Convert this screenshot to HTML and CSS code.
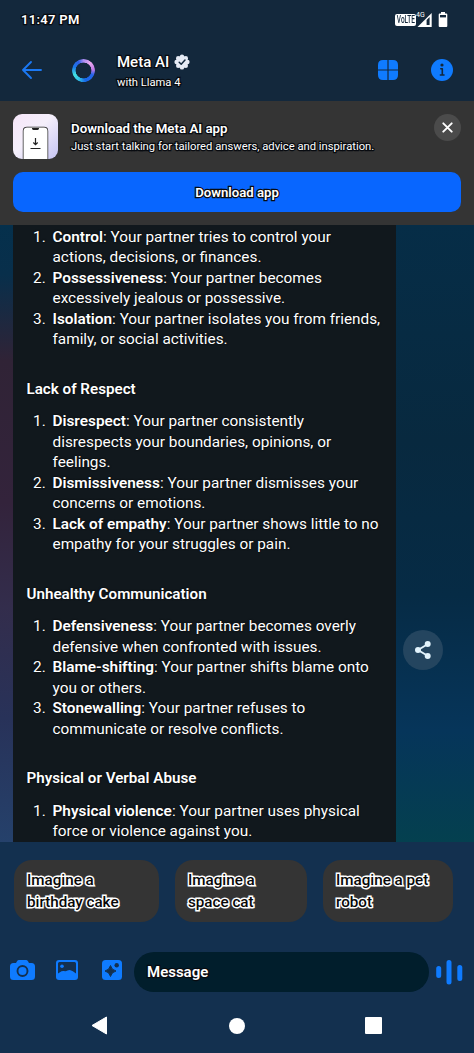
FILE: index.html
```html
<!DOCTYPE html>
<html lang="en">
  <head>
    <meta charset="UTF-8" />
    <meta name="viewport" content="width=device-width, initial-scale=1.0" />
    <title>Meta AI</title>
    <link rel="stylesheet" href="styles.css">
  </head>
  <body>
    <div class="phone">
      <div class="status-bar">
        <span class="time">11:47 PM</span>
        <div class="status-icons">
          <span class="volte"><span>VoLTE</span></span>
          <span class="signal">
            <svg width="17" height="16" viewBox="0 0 17 16">
              <path d="M15.7 1v14H1.5z" fill="#fff" />
              <path d="M10.600 8l3-3V13h-3z" fill="#13283c" />
            </svg>
            <span class="net">4G</span>
          </span>
          <svg class="battery" width="10" height="15" viewBox="0 0 10 15">
            <path d="M3 0h4v1.500h1.300q1 0 1 1V14q0 1-1 1H1.700q-1 0-1-1V2.500q0-1 1-1H3z" fill="#fff" />
            <path d="M2 3h6v2.400H2z" fill="#13283c" />
          </svg>
        </div>
      </div>

      <header class="header">
        <svg class="back" width="22" height="20" viewBox="0 0 22 20">
          <path d="M10 2L2 10l8 8M2 10h18" fill="none" stroke="#1b78f2" stroke-width="1.900" stroke-linecap="round" stroke-linejoin="round" />
        </svg>
        <div class="ring"></div>
        <div class="title">
          <h1>
            Meta AI
            <svg width="16" height="16" viewBox="0 0 16 16">
              <g fill="#e6ebf5">
                <circle cx="8" cy="8" r="6" />
                <circle cx="8" cy="2.600" r="2.200" />
                <circle cx="11.800" cy="4.200" r="2.200" />
                <circle cx="13.400" cy="8" r="2.200" />
                <circle cx="11.800" cy="11.800" r="2.200" />
                <circle cx="8" cy="13.400" r="2.200" />
                <circle cx="4.200" cy="11.800" r="2.200" />
                <circle cx="2.600" cy="8" r="2.200" />
                <circle cx="4.200" cy="4.200" r="2.200" />
              </g>
              <path d="M5.200 8.300l2 2 3.800-4.200" fill="none" stroke="#13283c" stroke-width="1.500" stroke-linecap="round" stroke-linejoin="round" />
            </svg>
          </h1>
          <p>with Llama 4</p>
        </div>
        <svg class="grid-icon" width="20" height="20" viewBox="0 0 20 20" fill="#0f7bff">
          <path d="M5 0h4.400v9.400H0V5q0-5 5-5zM10.600 0H15q5 0 5 5v4.400h-9.400zM0 10.600h9.400V20H5q-5 0-5-5zM10.600 10.600H20V15q0 5-5 5h-4.400z" />
        </svg>
        <svg class="info-icon" width="22" height="22" viewBox="0 0 22 22">
          <circle cx="11" cy="11" r="11" fill="#0f7bff" />
          <circle cx="11" cy="6" r="1.600" fill="#13283c" />
          <path d="M9.800 9.800h1.500v6M9.400 16h3.600" fill="none" stroke="#13283c" stroke-width="1.600" stroke-linecap="round" stroke-linejoin="round" />
        </svg>
      </header>

      <section class="banner">
        <div class="banner-top">
          <svg class="app-icon" width="45" height="45" viewBox="0 0 45 45">
            <defs>
              <linearGradient id="tile" x1="0" y1="0" x2="1" y2="1">
                <stop offset="0" stop-color="#f6e6f8" />
                <stop offset="0.450" stop-color="#f5effb" />
                <stop offset="1" stop-color="#c5c4f3" />
              </linearGradient>
            </defs>
            <rect width="45" height="45" rx="9" fill="url(#tile)" />
            <path d="M10.500 45V17q0-3.500 3.500-3.500h17q3.500 0 3.500 3.500v28" fill="#fff" stroke="#222" stroke-width="1.400" />
            <path d="M19 14h7v.6q0 1.400-1.400 1.400h-4.200q-1.400 0-1.400-1.400z" fill="#222" />
            <path d="M22.500 24v6.500M20.300 28.500l2.200 2.200 2.200-2.200M17.500 34.500h10" fill="none" stroke="#222" stroke-width="1.200" />
          </svg>
          <div class="banner-text">
            <h2>Download the Meta AI app</h2>
            <p>Just start talking for tailored answers, advice and inspiration.</p>
          </div>
          <button class="close" aria-label="Close">
            <svg width="11" height="11" viewBox="0 0 11 11">
              <path d="M1.300 1.300l8.400 8.400M9.700 1.300l-8.400 8.400" stroke="#fff" stroke-width="1.900" stroke-linecap="round" />
            </svg>
          </button>
        </div>
        <button class="download">Download app</button>
      </section>

      <main class="chat">
        <div class="bubble">
          <ol>
            <li><b>Control</b>: Your partner tries to control your actions, decisions, or finances.</li>
            <li><b>Possessiveness</b>: Your partner becomes excessively jealous or possessive.</li>
            <li><b>Isolation</b>: Your partner isolates you from friends, family, or social activities.</li>
          </ol>
          <h3>Lack of Respect</h3>
          <ol>
            <li><b>Disrespect</b>: Your partner consistently disrespects your boundaries, opinions, or feelings.</li>
            <li><b>Dismissiveness</b>: Your partner dismisses your concerns or emotions.</li>
            <li><b>Lack of empathy</b>: Your partner shows little to no empathy for your struggles or pain.</li>
          </ol>
          <h3>Unhealthy Communication</h3>
          <ol>
            <li><b>Defensiveness</b>: Your partner becomes overly defensive when confronted with issues.</li>
            <li><b>Blame-shifting</b>: Your partner shifts blame onto you or others.</li>
            <li><b>Stonewalling</b>: Your partner refuses to communicate or resolve conflicts.</li>
          </ol>
          <h3>Physical or Verbal Abuse</h3>
          <ol>
            <li><b>Physical violence</b>: Your partner uses physical force or violence against you.</li>
          </ol>
        </div>
        <button class="share" aria-label="Share">
          <svg width="18" height="20" viewBox="0 0 18 20" fill="#e2f3fc">
            <path d="M14 4L4 10l10 6" fill="none" stroke="#e2f3fc" stroke-width="1.900" />
            <circle cx="13.700" cy="4" r="3" />
            <circle cx="4" cy="10" r="3" />
            <circle cx="13.700" cy="16" r="3" />
          </svg>
        </button>
      </main>

      <footer class="bottom">
        <div class="chips">
          <button class="chip cake">Imagine a<br>birthday cake</button>
          <button class="chip cat">Imagine a<br>space cat</button>
          <button class="chip pet">Imagine a pet<br>robot</button>
        </div>

        <div class="composer">
          <div class="tools">
            <svg width="25" height="20" viewBox="0 0 25 20">
              <path d="M9 0h7q1.300 0 2 1.200L19 3h2.500Q25 3 25 6.500v10q0 3.500-3.500 3.500h-18Q0 20 0 16.500v-10Q0 3 3.500 3H6l1-1.800Q7.700 0 9 0z" fill="#0f7bff" />
              <circle cx="12.500" cy="11" r="5" fill="none" stroke="#14304f" stroke-width="1.900" />
            </svg>
            <svg width="22" height="20" viewBox="0 0 22 20">
              <rect width="22" height="20" rx="3" fill="#0f7bff" />
              <path d="M2 13.500V3.500Q2 2 3.500 2h15Q20 2 20 3.500v10q-3.500-2.800-5.500-3.300-1.500-.4-3 .4-1.800 1-3.200.5-1.500-.5-2.800.2z" fill="#14304f" />
              <circle cx="6" cy="6.300" r="1.800" fill="#0f7bff" />
            </svg>
            <svg width="20" height="20" viewBox="0 0 20 20">
              <rect width="20" height="20" rx="3.500" fill="#0f7bff" />
              <path d="M8.500 5.500q1 4.500 5.500 5.500-4.500 1-5.500 5.500-1-4.500-5.500-5.500 4.500-1 5.500-5.500z" fill="#14304f" stroke="#14304f" stroke-linejoin="round" />
              <circle cx="14.700" cy="5.300" r="2.200" fill="#14304f" />
            </svg>
          </div>
          <div class="message">Message</div>
          <svg class="voice" width="27" height="25" viewBox="0 0 27 25">
            <path d="M2.700 8.500v7M13 2.500v19.500M23.800 7.500v11" stroke="#0f7bff" stroke-width="5" stroke-linecap="round" />
          </svg>
        </div>

        <nav class="android-nav">
          <svg width="17" height="19" viewBox="0 0 17 19">
            <path d="M15.500 1v17L1 9.500z" fill="#fff" stroke="#fff" stroke-linejoin="round" />
          </svg>
          <span class="home"></span>
          <span class="recents"></span>
        </nav>
      </footer>
    </div>
  </body>
</html>
```
FILE: styles.css
```css
* {
  box-sizing: border-box;
}

body {
  margin: 0;
  background-color: #13304f;
  font-family: Roboto, "Liberation Sans", sans-serif;
  color: #fff;
}

h1,
h2,
h3,
p,
ol {
  margin: 0;
  padding: 0;
}

button {
  border: none;
  padding: 0;
  font-family: inherit;
  color: inherit;
}

svg {
  display: block;
  flex-shrink: 0;
}

.phone {
  width: 474px;
  height: 1053px;
  display: flex;
  flex-direction: column;
  overflow: hidden;
}

.time,
.title,
.banner,
.message {
  -webkit-text-stroke: 2.5px #080b10;
  paint-order: stroke fill;
}

/* status bar */
.status-bar {
  height: 39px;
  padding: 0 26px 0 21px;
  display: flex;
  align-items: center;
  justify-content: space-between;
  background-color: #13283c;
}

.time {
  font-size: 13px;
  font-weight: 600;
  letter-spacing: 0.3px;
}

.status-icons {
  display: flex;
  align-items: center;
}

.volte {
  width: 21px;
  height: 12px;
  border-radius: 2px;
  background-color: #fff;
  color: #13283c;
  font-size: 10px;
  font-weight: 500;
  line-height: 12px;
  display: flex;
  justify-content: center;
}

.volte span {
  transform: scaleX(0.65);
}

.signal {
  position: relative;
  margin: 0 5px 0 0;
}

.net {
  position: absolute;
  left: 0;
  top: -1px;
  font-size: 7px;
  line-height: 8px;
}

/* header */
.header {
  height: 62px;
  padding: 0 21px 0 21px;
  display: flex;
  align-items: center;
  background-color: #13283c;
}

.ring {
  width: 23px;
  height: 23px;
  margin-left: 29px;
  border-radius: 50%;
  background: conic-gradient(#a88df2, #eaa8ee 40deg, #c07ae8 85deg, #2563e8 115deg, #1769e8 170deg, #35c8e8 210deg, #43e0e0 245deg, #1a78ea 290deg, #2d5fe6 330deg, #a88df2);
  -webkit-mask: radial-gradient(circle, transparent 7.600px, #000 8.200px);
  mask: radial-gradient(circle, transparent 7.600px, #000 8.200px);
}

.title {
  flex: 1;
  margin-left: 22px;
  padding-top: 3px;
}

.title h1 {
  display: flex;
  align-items: center;
  gap: 5px;
  font-size: 15px;
  font-weight: 500;
  line-height: 22px;
}

.title p {
  font-size: 11.2px;
  line-height: 19px;
}

.info-icon {
  margin-left: 33px;
}

/* download banner */
.banner {
  height: 124px;
  padding: 13px 13px 0;
  background-color: #343434;
}

.banner-top {
  display: flex;
  height: 45px;
}

.banner-text {
  flex: 1;
  margin-left: 13px;
  padding-top: 6px;
}

.banner h2 {
  font-size: 13.3px;
  font-weight: 600;
  line-height: 18px;
}

.banner p {
  font-size: 11.23px;
  line-height: 18px;
  white-space: nowrap;
}

.close {
  width: 27px;
  height: 27px;
  border-radius: 50%;
  background-color: #4b4b4b;
  display: flex;
  align-items: center;
  justify-content: center;
}

.download {
  width: 100%;
  height: 40px;
  margin-top: 13px;
  border-radius: 10px;
  background-color: #0866ff;
  font-size: 13.2px;
  font-weight: 600;
  -webkit-text-stroke: inherit;
}

/* conversation */
.chat {
  height: 617px;
  padding-left: 13px;
  display: flex;
  background: linear-gradient(#062d47 0%, #08293f 35%, #062b45 60%, #06355a 82%, #04404f 100%);
  position: relative;
}

.chat::before {
  content: "";
  position: absolute;
  left: 0;
  top: 0;
  width: 13px;
  height: 100%;
  background: linear-gradient(#05304c 0%, #082f4b 8%, #302336 22%, #33233b 45%, #332d4c 62%, #283259 80%, #25416b 100%);
}

.bubble {
  width: 383px;
  height: 617px;
  padding: 2px 10px 0 13.5px;
  overflow: hidden;
  background-color: #11181d;
  font-size: 15.35px;
  line-height: 20.43px;
  text-shadow: 0 0 2px #000;
}

.bubble ol {
  padding-left: 23px;
}

.bubble li {
  padding-left: 3px;
}

.bubble b {
  font-weight: 600;
}

.bubble h3 {
  margin: 29px 0 12.4px;
  font-size: 15.2px;
  font-weight: 600;
}

.share {
  width: 40px;
  height: 40px;
  margin: 405px 0 0 7px;
  border-radius: 50%;
  background-color: #24455f;
  display: flex;
  align-items: center;
  justify-content: center;
}

/* suggestions, composer and system nav */
.bottom {
  flex: 1;
  background-color: #13304f;
}

.chips {
  display: flex;
  gap: 16px;
  padding: 18px 14px 0;
}

.chip {
  height: 62px;
  padding-left: 13px;
  border-radius: 18px;
  background-color: #343434;
  color: #080808;
  font-size: 15.2px;
  font-weight: 500;
  line-height: 22px;
  text-align: left;
  -webkit-text-stroke: 3px #fff;
  paint-order: stroke fill;
}

.cake {
  width: 145px;
}

.cat {
  width: 132px;
}

.pet {
  width: 130px;
}

.composer {
  display: flex;
  align-items: center;
  margin-top: 30px;
  padding-left: 10px;
}

.tools {
  display: flex;
  gap: 22px;
  padding-bottom: 4px;
}

.tools svg:nth-child(2) {
  margin-left: -1px;
}

.tools svg:last-child {
  margin-left: 2px;
}

.message {
  width: 295px;
  height: 40px;
  margin-left: 12px;
  padding-left: 13px;
  border-radius: 20px;
  background-color: #011e2c;
  font-size: 15px;
  font-weight: 600;
  line-height: 41px;
}

.voice {
  margin-left: 7px;
}

.android-nav {
  display: flex;
  align-items: center;
  justify-content: space-between;
  margin-top: 24px;
  padding: 0 92px 0 91px;
}

.home {
  width: 16px;
  height: 16px;
  border-radius: 50%;
  background-color: #fff;
}

.recents {
  width: 17px;
  height: 17px;
  border-radius: 1px;
  background-color: #fff;
}
```
